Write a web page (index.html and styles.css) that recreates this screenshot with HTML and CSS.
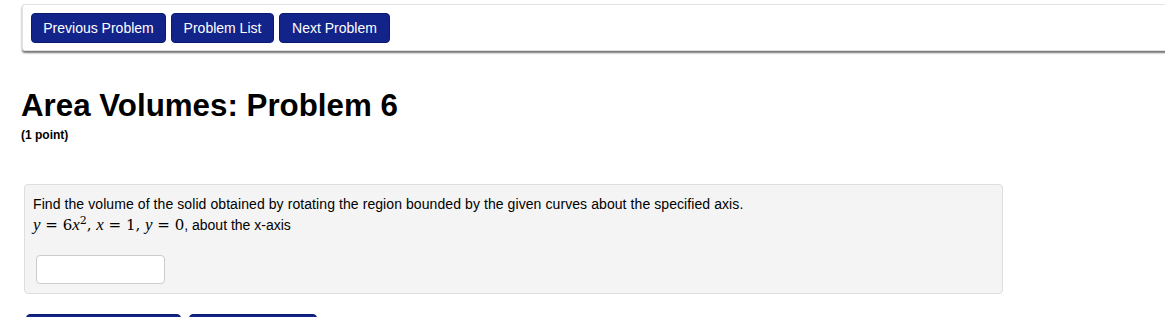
FILE: index.html
```html
<!DOCTYPE html>
<html>
<head>
<meta charset="utf-8">
<link rel="stylesheet" href="styles.css">
</head>
<body>
<div class="page">
  <nav class="navbar">
    <button class="btn btn-prev">Previous Problem</button>
    <button class="btn btn-list">Problem List</button>
    <button class="btn btn-next">Next Problem</button>
  </nav>
  <h1 class="title">Area Volumes: Problem 6</h1>
  <div class="points">(1 point)</div>
  <div class="problem">
    <p class="statement">Find the volume of the solid obtained by rotating the region bounded by the given curves about the specified axis.</p>
    <p class="mathline"><span class="math"><i>y</i> = 6<i>x</i><sup>2</sup>, <i>x</i> = 1, <i>y</i> = 0</span>, about the x-axis</p>
    <input class="answer" type="text">
  </div>
  <div class="actions">
    <button class="btn btn-wide"></button>
    <button class="btn btn-mid"></button>
  </div>
</div>
</body>
</html>
```
FILE: styles.css
```css
html, body {
  margin: 0;
  padding: 0;
  background: #fff;
  font-family: "Liberation Sans", Arial, sans-serif;
  color: #000;
  overflow: hidden;
}
.page {
  padding: 4px 0 0 22px;
}
.navbar {
  display: flex;
  gap: 5px;
  padding: 8px 8px 7px 8px;
  background: #fff;
  border: 1px solid #e2e2e2;
  border-right: none;
  border-radius: 3px 0 0 3px;
  box-shadow: 0 2px 2px rgba(0,0,0,0.55);
  margin-right: -10px;
}
.btn {
  background: #12248a;
  color: #fff;
  border: 1px solid #0b1a6e;
  border-radius: 4px;
  font-family: "Liberation Sans", Arial, sans-serif;
  font-size: 14px;
  height: 30px;
  padding: 0;
  line-height: 28px;
  text-align: center;
}
.btn-prev { width: 135px; }
.btn-list { width: 103px; }
.btn-next { width: 111px; }
.title {
  font-size: 31.3px;
  font-weight: bold;
  margin: 37px 0 0 -1px;
  line-height: 36px;
}
.points {
  font-size: 12px;
  font-weight: bold;
  margin: 4px 0 0 -1px;
  line-height: 14px;
}
.problem {
  margin: 42px 0 0 2px;
  width: 979px;
  background: #f4f4f4;
  border: 1px solid #dedede;
  border-radius: 4px;
  padding: 12px 8px 9px 8px;
  box-sizing: border-box;
  height: 110px;
}
.statement, .mathline {
  font-size: 14px;
  letter-spacing: 0.08px;
  margin: 0;
  line-height: 15px;
}
.mathline {
  margin-top: 5px;
  letter-spacing: 0;
}
.math {
  font-family: "DejaVu Serif", "Liberation Serif", serif;
  font-size: 15px;
}
.math i {
  font-family: "Liberation Serif", serif;
  font-size: 17px;
}
.math sup {
  font-size: 11px;
  line-height: 0;
}
.answer {
  display: block;
  margin: 22px 0 0 3px;
  width: 129px;
  height: 29px;
  box-sizing: border-box;
  border: 1px solid #cccccc;
  border-radius: 4px;
  background: #fff;
}
.actions {
  display: flex;
  gap: 8px;
  margin: 20px 0 0 4px;
}
.btn-wide { width: 155px; }
.btn-mid { width: 128px; }
```
